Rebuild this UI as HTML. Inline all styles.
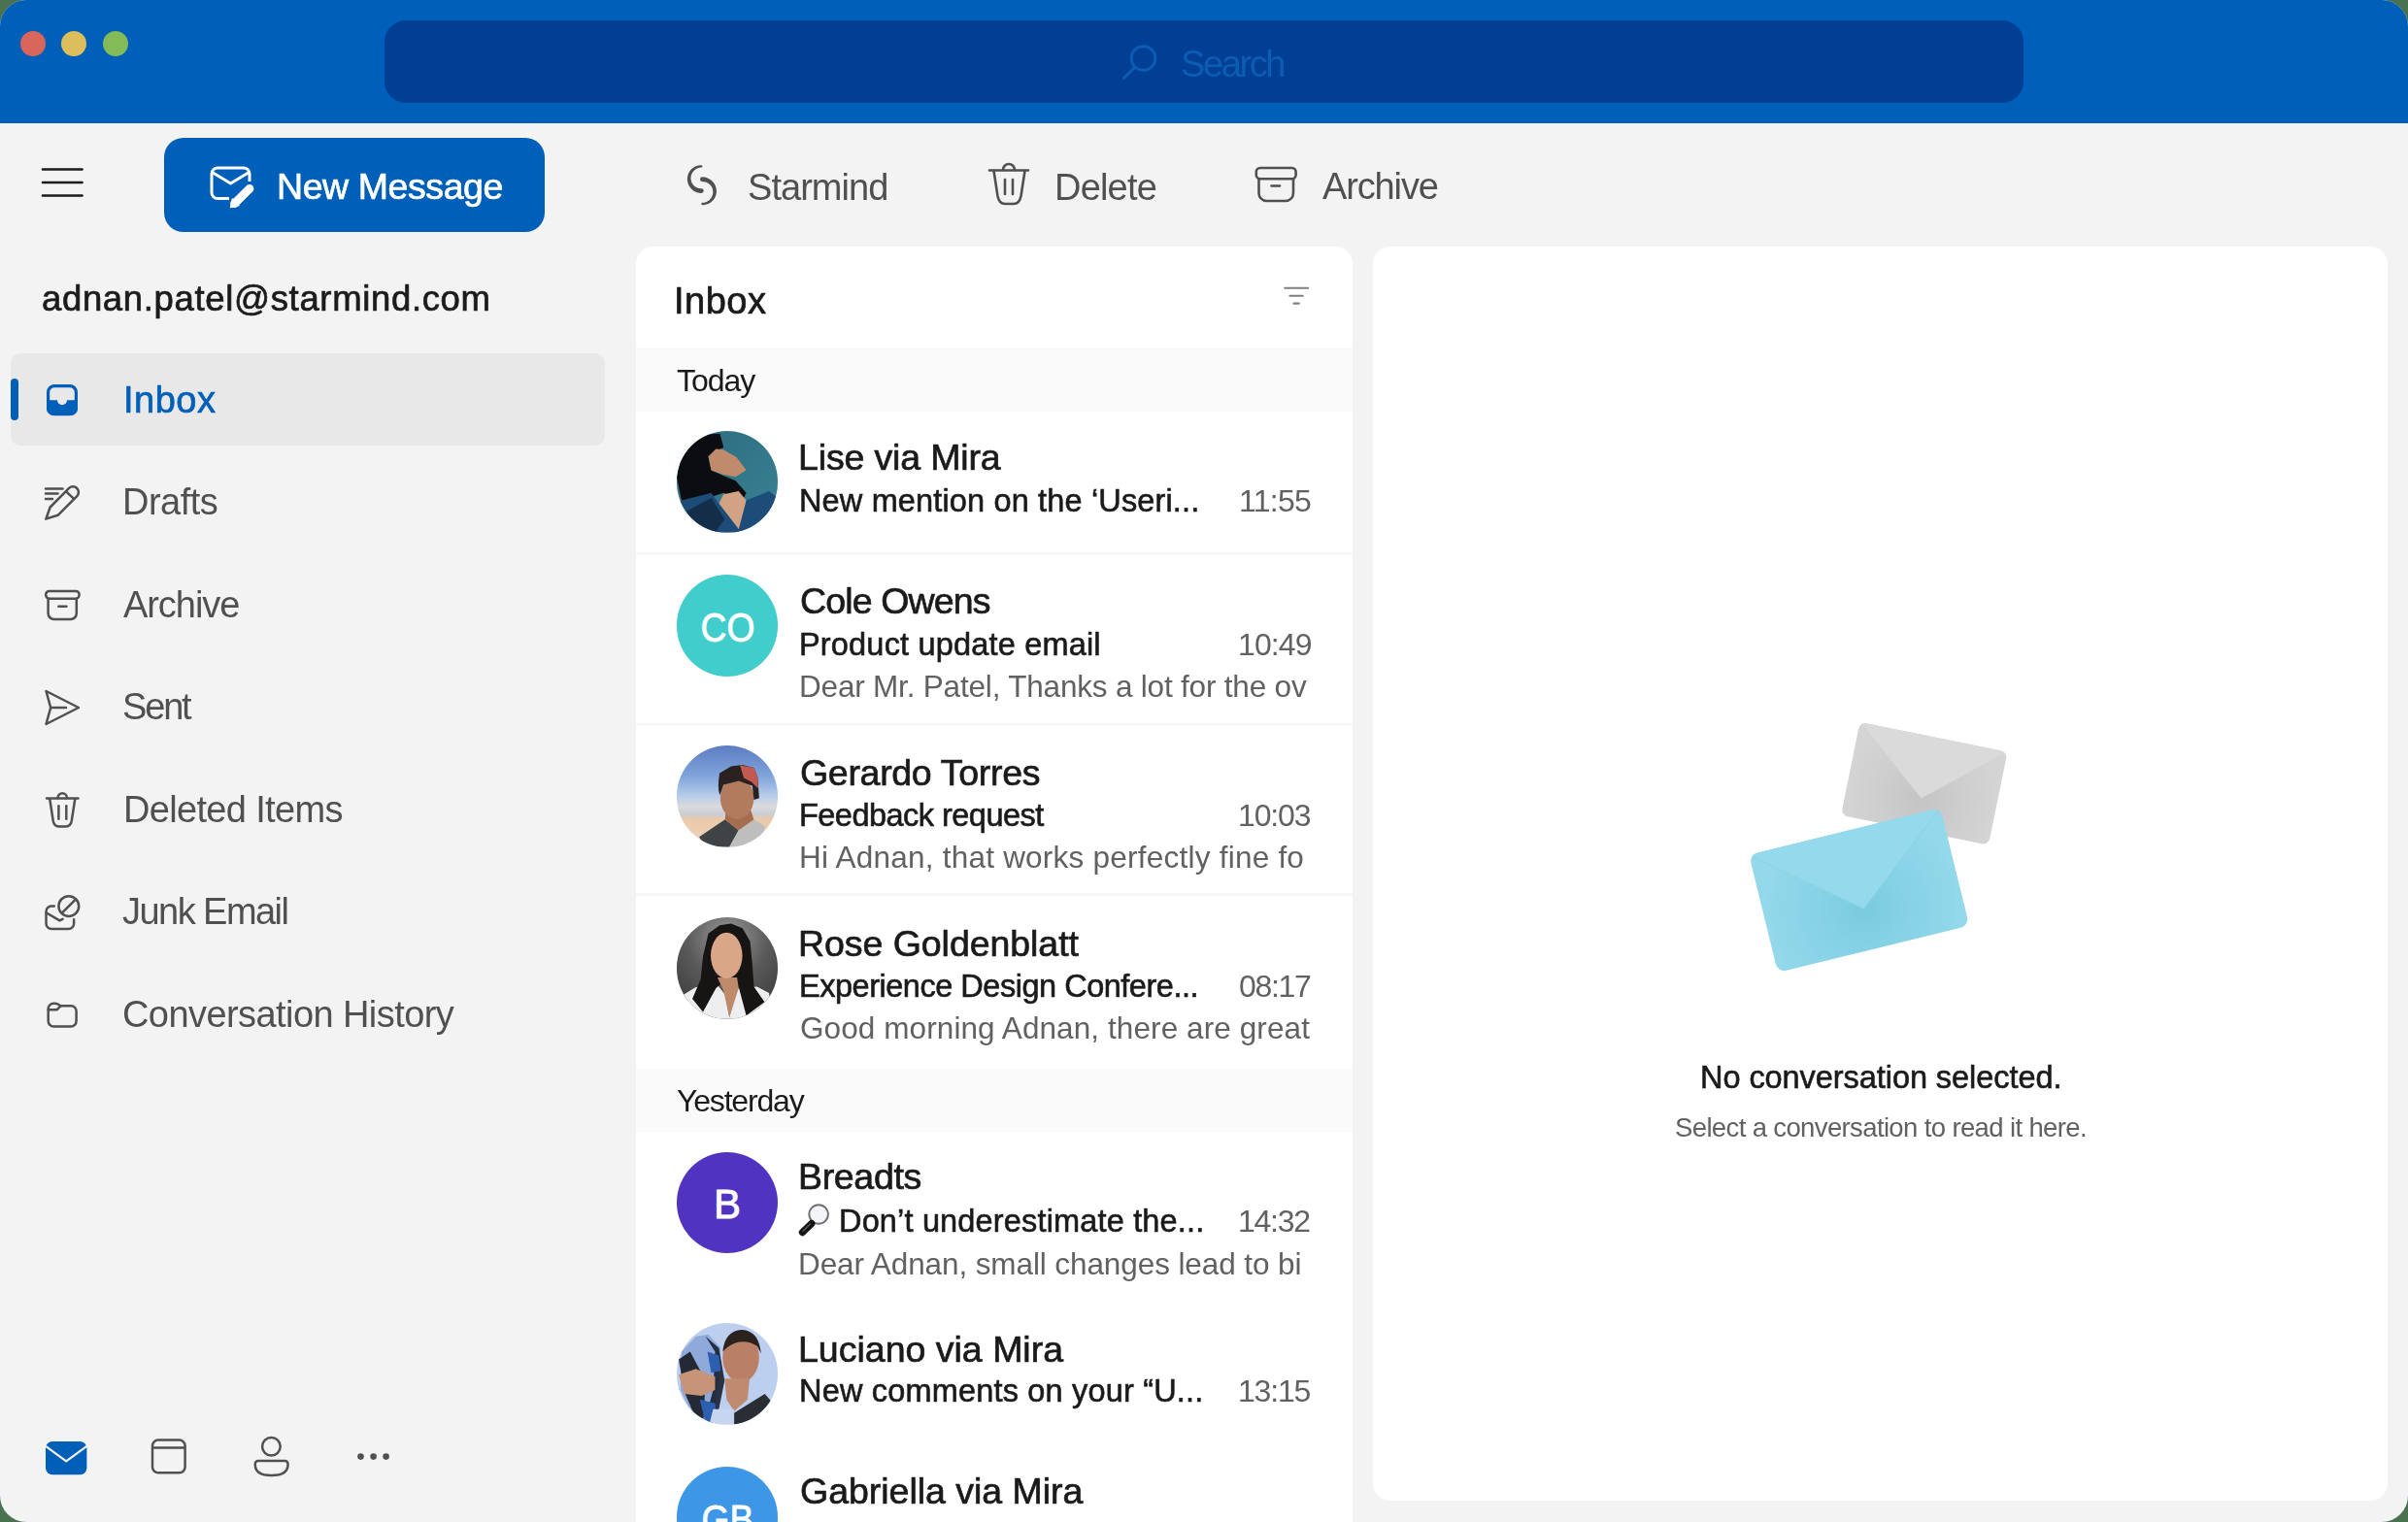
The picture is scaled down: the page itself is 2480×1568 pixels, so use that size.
<!DOCTYPE html>
<html><head><meta charset="utf-8"><title>Mail</title>
<style>
html,body{margin:0;padding:0;width:2480px;height:1568px;overflow:hidden;background:#4A7150;}
*{box-sizing:border-box;}
#win{position:absolute;left:0;top:0;width:2480px;height:1568px;border-radius:27px;overflow:hidden;background:#F3F3F3;font-family:"Liberation Sans",sans-serif;}
.t{position:absolute;white-space:nowrap;will-change:transform;}
</style></head><body><div id="win">
<div style="position:absolute;left:0;top:0;width:2480px;height:126.5px;background:#005FB8"></div>
<div style="position:absolute;left:21.3px;top:32px;width:26px;height:26px;border-radius:50%;background:#D9665B"></div>
<div style="position:absolute;left:63.2px;top:32px;width:26px;height:26px;border-radius:50%;background:#DCBE5D"></div>
<div style="position:absolute;left:105.8px;top:32px;width:26px;height:26px;border-radius:50%;background:#82BB58"></div>
<div style="position:absolute;left:396px;top:21px;width:1688px;height:85px;border-radius:22px;background:#003F93"></div>
<svg style="position:absolute;left:1150px;top:40px" width="50" height="50" viewBox="1150 40 50 50"><circle cx="1177.5" cy="60" r="12.3" fill="none" stroke="#0A5DB3" stroke-width="3"/><line x1="1168.5" y1="69.5" x2="1157.5" y2="80.5" stroke="#0A5DB3" stroke-width="3" stroke-linecap="round"/></svg>
<svg style="position:absolute;left:0;top:126px" width="640" height="128" viewBox="0 126 640 128"><g stroke="#1a1a1a" stroke-width="2.6" stroke-linecap="round"><line x1="44" y1="174.5" x2="84.5" y2="174.5"/><line x1="44" y1="188" x2="84.5" y2="188"/><line x1="44" y1="201.5" x2="84.5" y2="201.5"/></g></svg>
<div style="position:absolute;left:169px;top:142px;width:392px;height:97px;border-radius:20px;background:#005FB8"></div>
<svg style="position:absolute;left:200px;top:160px" width="80" height="70" viewBox="200 160 80 70"><path d="M236,204.5 H224 a6,6 0 0 1 -6,-6 V179 a6,6 0 0 1 6,-6 H251 a6,6 0 0 1 6,6 V187" fill="none" stroke="#fff" stroke-width="3"/><path d="M218.5,177.5 L237.5,189 L256.5,177.5" fill="none" stroke="#fff" stroke-width="3" stroke-linejoin="round"/><path d="M241.6,209.6 L257,194.4" stroke="#fff" stroke-width="8.8" stroke-linecap="round"/><path d="M237.6,213.6 L239.5,205 L246,211.5 Z" fill="#fff" stroke="#fff" stroke-width="1.5" stroke-linejoin="round"/></svg>
<svg style="position:absolute;left:690px;top:150px" width="820" height="80" viewBox="690 150 820 80"><g fill="#505050"><path d="M722.30,170.25 L721.22,170.26 L720.14,170.36 L719.07,170.54 L718.01,170.80 L716.98,171.15 L715.97,171.57 L715.00,172.08 L714.07,172.67 L713.18,173.32 L712.35,174.05 L711.57,174.84 L710.86,175.69 L710.22,176.59 L709.64,177.55 L709.15,178.55 L708.73,179.59 L708.39,180.66 L708.14,181.76 L707.98,182.87 L707.90,184.00 L707.91,185.13 L708.01,186.26 L708.20,187.38 L708.48,188.49 L708.85,189.57 L709.30,190.63 L709.83,191.64 L710.44,192.62 L711.13,193.54 L711.89,194.41 L712.72,195.22 L713.61,195.97 L714.56,196.64 L715.56,197.24 L716.60,197.75 L717.69,198.19 L718.81,198.54 L719.96,198.80 L721.12,198.97 L722.30,199.05 A2.45,2.45 0 0 0 722.30,194.15 L721.50,194.15 L720.70,194.09 L719.91,193.96 L719.12,193.78 L718.35,193.53 L717.60,193.22 L716.88,192.85 L716.18,192.42 L715.52,191.94 L714.89,191.41 L714.31,190.82 L713.77,190.20 L713.29,189.52 L712.85,188.81 L712.47,188.07 L712.15,187.30 L711.89,186.50 L711.70,185.68 L711.57,184.84 L711.50,184.00 L711.50,183.15 L711.57,182.30 L711.70,181.46 L711.90,180.62 L712.17,179.80 L712.50,179.01 L712.90,178.24 L713.35,177.50 L713.87,176.80 L714.43,176.13 L715.05,175.52 L715.72,174.95 L716.44,174.43 L717.19,173.97 L717.98,173.57 L718.80,173.23 L719.65,172.96 L720.52,172.76 L721.40,172.62 L722.30,172.55 A1.15,1.15 0 0 0 722.30,170.25 Z"/><path d="M723.50,182.35 L724.68,182.43 L725.84,182.60 L726.99,182.86 L728.11,183.21 L729.20,183.65 L730.24,184.16 L731.24,184.76 L732.19,185.43 L733.08,186.18 L733.91,186.99 L734.67,187.86 L735.36,188.78 L735.97,189.76 L736.50,190.77 L736.95,191.83 L737.32,192.91 L737.60,194.02 L737.79,195.14 L737.89,196.27 L737.90,197.40 L737.82,198.53 L737.66,199.64 L737.41,200.74 L737.07,201.81 L736.65,202.85 L736.16,203.85 L735.58,204.81 L734.94,205.71 L734.23,206.56 L733.45,207.35 L732.62,208.08 L731.73,208.73 L730.80,209.32 L729.83,209.83 L728.82,210.25 L727.79,210.60 L726.73,210.86 L725.66,211.04 L724.58,211.14 L723.50,211.15 A1.15,1.15 0 0 1 723.50,208.85 L724.40,208.78 L725.28,208.64 L726.15,208.44 L727.00,208.17 L727.82,207.83 L728.61,207.43 L729.36,206.97 L730.08,206.45 L730.75,205.88 L731.37,205.27 L731.93,204.60 L732.45,203.90 L732.90,203.16 L733.30,202.39 L733.63,201.60 L733.90,200.78 L734.10,199.94 L734.23,199.10 L734.30,198.25 L734.30,197.40 L734.23,196.56 L734.10,195.72 L733.91,194.90 L733.65,194.10 L733.33,193.33 L732.95,192.59 L732.51,191.88 L732.03,191.20 L731.49,190.58 L730.91,189.99 L730.28,189.46 L729.62,188.98 L728.92,188.55 L728.20,188.18 L727.45,187.87 L726.68,187.62 L725.89,187.44 L725.10,187.31 L724.30,187.25 L723.50,187.25 A2.45,2.45 0 0 1 723.50,182.35 Z"/></g><g fill="none" stroke="#505050" stroke-width="2.6" stroke-linecap="round" stroke-linejoin="round"><line x1="1019" y1="175.5" x2="1059" y2="175.5"/><path d="M1033,175 A6,6 0 0 1 1045,175"/><path d="M1023.5,176 L1027.5,202 Q1029,210 1035,210 H1044 Q1050,210 1051.5,202 L1055.5,176"/><line x1="1035" y1="185" x2="1035" y2="200"/><line x1="1043" y1="185" x2="1043" y2="200"/><rect x="1293.8" y="173" width="40.8" height="11.2" rx="4"/><path d="M1296.5,184.5 V199 a8,8 0 0 0 8,8 H1324 a8,8 0 0 0 8,-8 V184.5"/><line x1="1309.5" y1="191.5" x2="1318" y2="191.5"/></g></svg>
<div style="position:absolute;left:10.5px;top:364px;width:612px;height:94.5px;border-radius:10px;background:#E8E8E8"></div>
<div style="position:absolute;left:10.5px;top:390px;width:8px;height:42.5px;border-radius:4px;background:#005FB8"></div>
<svg style="position:absolute;left:0;top:380px" width="120" height="700" viewBox="0 380 120 700"><rect x="49.6" y="397.6" width="28.8" height="29" rx="6.5" fill="none" stroke="#005FB8" stroke-width="3.2"/><path d="M48,412.3 H59 a5,5 0 0 0 10,0 H80 V421 a7,7 0 0 1 -7,7 H55 a7,7 0 0 1 -7,-7 Z" fill="#005FB8"/><g fill="none" stroke="#505050" stroke-width="2.5" stroke-linecap="round" stroke-linejoin="round"><line x1="47" y1="503.4" x2="64.5" y2="503.4"/><line x1="47" y1="508.6" x2="59.5" y2="508.6"/><line x1="47" y1="513.9" x2="54" y2="513.9"/><path d="M47.3,534.6 L51.7,522.5 L71.1,502.9 A5.8,5.8 0 0 1 79.3,511.1 L59.6,530.8 Z"/><line x1="68.4" y1="506.7" x2="75.6" y2="513.4"/><rect x="47.2" y="608.9" width="34.4" height="7.8" rx="3.6"/><path d="M49.6,617 V632 a6,6 0 0 0 6,6 H72.8 a6,6 0 0 0 6,-6 V617"/><line x1="60.3" y1="624.7" x2="68.4" y2="624.7"/><path d="M47.5,712 L81,729 L47.5,746 L52.2,729 Z"/><line x1="52.2" y1="729" x2="68" y2="729"/><line x1="48" y1="822.6" x2="80.5" y2="822.6"/><path d="M59.5,822 A4.7,4.7 0 0 1 68.9,822"/><path d="M51.3,823.5 L54.8,846 Q55.8,851.6 61.5,851.6 H67 Q72.7,851.6 73.7,846 L77.2,823.5"/><line x1="60.4" y1="830.2" x2="60.4" y2="843.8"/><line x1="68.3" y1="830.2" x2="68.3" y2="843.8"/><path d="M55.8,933.6 H53 a5.5,5.5 0 0 0 -5.5,5.5 V951.6 a5.5,5.5 0 0 0 5.5,5.5 H70.6 a5.5,5.5 0 0 0 5.5,-5.5 V947.3"/><path d="M48,940.5 L61.4,948.4 L64.6,946.8"/><circle cx="70.8" cy="933.6" r="10.4"/><line x1="64" y1="940.4" x2="77.6" y2="926.8"/><path d="M49.7,1043 V1052 a5.5,5.5 0 0 0 5.5,5.5 H73.1 a5.5,5.5 0 0 0 5.5,-5.5 V1041.8 a5.5,5.5 0 0 0 -5.5,-5.5 H62.5 L59,1034.2 Q58,1033.8 56.5,1033.8 H55.2 a5.5,5.5 0 0 0 -5.5,5.5 Z"/><path d="M49.7,1040.3 H58.5 L62.5,1036.3"/></g></svg>
<svg style="position:absolute;left:30px;top:1470px" width="400" height="70" viewBox="30 1470 400 70"><rect x="47" y="1485" width="42.4" height="34.2" rx="7" fill="#005FB8"/><path d="M47,1489.8 L68.2,1505.3 L89.4,1489.8" fill="none" stroke="#f3f3f3" stroke-width="2.2"/><g fill="none" stroke="#505050" stroke-width="2.5" stroke-linecap="round" stroke-linejoin="round"><rect x="157" y="1483.6" width="33.6" height="33.7" rx="6"/><line x1="157.5" y1="1491.5" x2="190" y2="1491.5"/><circle cx="279.4" cy="1490.2" r="9.3"/><path d="M266,1505 H293.5 a3,3 0 0 1 3,3 V1509 Q296.5,1520 279.6,1520 Q262.8,1520 262.8,1509 V1508 a3,3 0 0 1 3,-3 Z"/></g><g fill="#505050"><circle cx="371.5" cy="1500.6" r="3.3"/><circle cx="384.6" cy="1500.6" r="3.3"/><circle cx="397.6" cy="1500.6" r="3.3"/></g></svg>
<div class="lp" style="position:absolute;left:654.5px;top:253.7px;width:738.5px;height:1400px;border-radius:18px;background:#ffffff;overflow:hidden"><svg style="position:absolute;left:660.5px;top:36.30000000000001px" width="40" height="30" viewBox="1315 290 40 30"><g stroke="#808080" stroke-width="2.1" stroke-linecap="round"><line x1="1323.2" y1="296.8" x2="1347.2" y2="296.8"/><line x1="1328.4" y1="304.8" x2="1341.8" y2="304.8"/><line x1="1332.4" y1="312.6" x2="1337.8" y2="312.6"/></g></svg><div style="position:absolute;left:0;top:104.69999999999999px;width:100%;height:65.4px;background:#FAFAFA"></div><div style="position:absolute;left:0;top:847.3px;width:100%;height:64.6px;background:#FAFAFA"></div><div style="position:absolute;left:0;top:315.3px;width:100%;height:3px;background:#F7F7F7"></div><div style="position:absolute;left:0;top:491.3px;width:100%;height:3px;background:#F7F7F7"></div><div style="position:absolute;left:0;top:666.8px;width:100%;height:3px;background:#F7F7F7"></div><div style="position:absolute;left:42.299999999999955px;top:190.8px;width:104.5px;height:104.5px;border-radius:50%;overflow:hidden;"><svg width="104.5" height="104.5" viewBox="0 0 106 106"><defs><linearGradient id="lg1" x1="0" y1="0" x2="1" y2="1"><stop offset="0" stop-color="#2C6A7C"/><stop offset="1" stop-color="#3A8397"/></linearGradient></defs><rect width="106" height="106" fill="url(#lg1)"/><path d="M0,48 L5,25 L17,9 L33,3.6 L45,2.8 L49,17 L41,21 L33,26.6 L36,41 L49,47 L61.5,52 L72.6,64.7 L68.7,72.6 L48.8,64.7 L36.9,68.7 L25,76.6 L17,80.6 L5,72.6 Z" fill="#0B0D10"/><path d="M33,26.6 L40.9,18.7 L48.8,19.4 L62.3,27.4 L72.6,40.9 L61.5,48 L48.8,45.6 L36,41 Z" fill="#C08A6C"/><path d="M48.8,66.3 L64.7,63 L72.6,72.6 L71,96.4 L64.7,102.8 L44,75.8 Z" fill="#D2A284"/><path d="M0,76 L5,72.6 L36,64.7 L44,75.8 L64.7,102.8 L72.6,72.6 L96.4,63 L106,70 L106,106 L0,106 Z" fill="#1E4C78"/><path d="M10,84 L36,70 L50,92 L40,106 L20,100 Z" fill="#0D1A2A" opacity="0.6"/></svg></div><div style="position:absolute;left:42.299999999999955px;top:338.8px;width:104.5px;height:104.5px;border-radius:50%;overflow:hidden;background:#40CDCB"><div style="position:absolute;left:0;width:104.5px;top:33.7px;font-size:42px;line-height:42px;text-align:center;color:#fff;-webkit-text-stroke:0.8px #fff;white-space:nowrap"><span style="display:inline-block;transform:scaleX(0.885)">CO</span></div></div><div style="position:absolute;left:42.299999999999955px;top:514.5999999999999px;width:104.5px;height:104.5px;border-radius:50%;overflow:hidden;"><svg width="104.5" height="104.5" viewBox="0 0 106 106"><defs><linearGradient id="gg1" x1="0" y1="0" x2="0" y2="1"><stop offset="0" stop-color="#5D7DC2"/><stop offset="0.3" stop-color="#7FA3DA"/><stop offset="0.5" stop-color="#B7CDEB"/><stop offset="0.6" stop-color="#DADADA"/><stop offset="0.68" stop-color="#C9CDD3"/><stop offset="0.72" stop-color="#E8C9AA"/><stop offset="1" stop-color="#F0D6BE"/></linearGradient></defs><rect width="106" height="106" fill="url(#gg1)"/><path d="M23.4,95.6 L50.4,77.4 L64.7,88.5 L55,106 L30,106 Z" fill="#3E4446"/><path d="M55,106 L64.7,88.5 L80.6,77.4 L92.5,84.5 L88.5,96.4 L72.6,106 Z" fill="#BEBEBE"/><path d="M50.4,77.4 L52,64 L76,64 L80.6,77.4 L64.7,88.5 Z" fill="#A56E50"/><ellipse cx="63" cy="55" rx="17.5" ry="22" fill="#B27B5D"/><path d="M45,52 Q42,44 44.8,29 L56.7,21.8 L68.7,20.2 L80.6,23.4 L84.5,33 L86.1,55 L80.6,56.7 L79,42 L64.7,37 L48.8,41 Z" fill="#2A2220"/><path d="M66,20.5 L80.6,23.4 L84.5,33 L85,45 L78,38 L70,34 Z" fill="#C25A52"/></svg></div><div style="position:absolute;left:42.299999999999955px;top:691.5999999999999px;width:104.5px;height:104.5px;border-radius:50%;overflow:hidden;"><svg width="104.5" height="104.5" viewBox="0 0 106 106"><defs><radialGradient id="rg1" cx="0.5" cy="0.2" r="0.8"><stop offset="0" stop-color="#9A9A9A"/><stop offset="0.5" stop-color="#5A5A5A"/><stop offset="1" stop-color="#3C3C3C"/></radialGradient></defs><rect width="106" height="106" fill="url(#rg1)"/><path d="M7.5,80.6 L19.4,73.4 L40.9,68.7 L50.4,80.6 L55,104.4 L60.7,80.6 L64.7,74 L83.7,72.6 L96.4,79 L100,106 L5,106 Z" fill="#ECEEF0"/><path d="M27.4,98.8 L16.3,85.3 L25,64.7 L27.4,40.9 L33,17 L44.8,8.3 L56.7,6.7 L68.7,11.5 L76.6,25 L78.9,48.8 L80.6,72.6 L91.7,88.5 L72.6,102.8 L65,74 L53,64 L41,74 Z" fill="#171414"/><path d="M42.5,63 L63,63 L64.7,74 L55,104.4 L48.8,76.6 Z" fill="#BE8A6A"/><ellipse cx="52" cy="40" rx="16.5" ry="24" fill="#D9A687"/></svg></div><div style="position:absolute;left:42.299999999999955px;top:933.0px;width:104.5px;height:104.5px;border-radius:50%;overflow:hidden;background:#5033C0"><div style="position:absolute;left:0;width:104.5px;top:33.7px;font-size:42px;line-height:42px;text-align:center;color:#fff;-webkit-text-stroke:0.8px #fff;white-space:nowrap"><span style="display:inline-block;transform:scaleX(1)">B</span></div></div><div style="position:absolute;left:42.299999999999955px;top:1109.8px;width:104.5px;height:104.5px;border-radius:50%;overflow:hidden;"><svg width="104.5" height="104.5" viewBox="0 0 106 106"><rect width="106" height="106" fill="#BCCFEE"/><path d="M5,30 L20,14 L33,12 L46,26 L44,60 L40,88 L34,106 L18,100 L4,70 Z" fill="#8FA9DB"/><path d="M2,38 L14,30 L30,60 L28,100 L20,100 L8,72 Z" fill="#101418" opacity="0.85"/><path d="M30,14 L44,26 L50,60 L44,90 L36,106 L30,100 L38,70 L40,30 Z" fill="#1A2030" opacity="0.9"/><path d="M32,30 L44,34 L46,50 L36,52 Z" fill="#2D5FB0"/><path d="M24,80 L40,84 L42,100 L30,104 Z" fill="#2D5FB0"/><path d="M2,54 L20,48 L40,56 L40,70 L26,76 L8,74 Z" fill="#C89478"/><ellipse cx="67" cy="36" rx="19" ry="26" fill="#B98066"/><path d="M48,30 Q50,8 68,7 Q86,8 88,32 L84,24 Q68,14 52,26 Z" fill="#2B211E"/><path d="M50,58 L76,58 L74,80 L60,92 L52,80 Z" fill="#C08A70"/><path d="M60,94 L92,74 L104,88 L90,104 L60,106 Z" fill="#2A2E34"/><path d="M38,90 L60,90 L58,106 L34,106 Z" fill="#C6D6F0"/></svg></div><div style="position:absolute;left:42.299999999999955px;top:1257.3px;width:104.5px;height:104.5px;border-radius:50%;overflow:hidden;background:#3D97E6"><div style="position:absolute;left:0;width:104.5px;top:33.7px;font-size:42px;line-height:42px;text-align:center;color:#fff;-webkit-text-stroke:0.8px #fff;white-space:nowrap"><span style="display:inline-block;transform:scaleX(0.885)">GB</span></div></div><svg style="position:absolute;left:163.5px;top:982.3px" width="40" height="40" viewBox="818 1236 40 40"><circle cx="843.1" cy="1251" r="9.8" fill="#F3F5F8" stroke="#707070" stroke-width="1.9"/><path d="M835.8,1260.6 L826.4,1269.6" stroke="#151515" stroke-width="7.2" stroke-linecap="round"/><path d="M834.5,1261 L827,1268.2" stroke="#8a8a8a" stroke-width="1.3" stroke-linecap="round" opacity="0.6"/></svg><div class="t" id="list_inbox" style="left:39.90px;top:36.83px;font-size:38px;line-height:38px;color:#1a1a1a;letter-spacing:0.500px;-webkit-text-stroke:0.7px #1a1a1a;">Inbox</div>
<div class="t" id="today" style="left:42.10px;top:122.61px;font-size:32px;line-height:32px;color:#1a1a1a;letter-spacing:-1.050px;">Today</div>
<div class="t" id="yesterday" style="left:42.10px;top:863.91px;font-size:32px;line-height:32px;color:#1a1a1a;letter-spacing:-1.180px;">Yesterday</div>
<div class="t" id="lise_name" style="left:167.60px;top:199.16px;font-size:37.5px;line-height:37.5px;color:#1a1a1a;letter-spacing:-0.150px;-webkit-text-stroke:0.7px #1a1a1a;">Lise via Mira</div>
<div class="t" id="lise_subj" style="left:168.60px;top:245.99px;font-size:32.5px;line-height:32.5px;color:#1a1a1a;letter-spacing:0.148px;-webkit-text-stroke:0.6px #1a1a1a;">New mention on the ‘Useri...</div>
<div class="t" id="lise_time" style="left:621.30px;top:246.41px;font-size:32px;line-height:32px;color:#616161;letter-spacing:-0.700px;">11:55</div>
<div class="t" id="cole_name" style="left:169.60px;top:347.76px;font-size:37.5px;line-height:37.5px;color:#1a1a1a;letter-spacing:-0.867px;-webkit-text-stroke:0.7px #1a1a1a;">Cole Owens</div>
<div class="t" id="cole_subj" style="left:168.60px;top:393.99px;font-size:32.5px;line-height:32.5px;color:#1a1a1a;letter-spacing:0.181px;-webkit-text-stroke:0.6px #1a1a1a;">Product update email</div>
<div class="t" id="cole_time" style="left:620.50px;top:394.41px;font-size:32px;line-height:32px;color:#616161;letter-spacing:-0.900px;">10:49</div>
<div class="t" id="cole_prev" style="left:168.60px;top:438.14px;font-size:31.5px;line-height:31.5px;color:#616161;letter-spacing:-0.191px;">Dear Mr. Patel, Thanks a lot for the ov</div>
<div class="t" id="gerardo_name" style="left:169.60px;top:523.96px;font-size:37.5px;line-height:37.5px;color:#1a1a1a;letter-spacing:-0.309px;-webkit-text-stroke:0.7px #1a1a1a;">Gerardo Torres</div>
<div class="t" id="gerardo_subj" style="left:168.60px;top:570.09px;font-size:32.5px;line-height:32.5px;color:#1a1a1a;letter-spacing:-0.528px;-webkit-text-stroke:0.6px #1a1a1a;">Feedback request</div>
<div class="t" id="gerardo_time" style="left:620.50px;top:570.51px;font-size:32px;line-height:32px;color:#616161;letter-spacing:-1.150px;">10:03</div>
<div class="t" id="gerardo_prev" style="left:168.60px;top:614.24px;font-size:31.5px;line-height:31.5px;color:#616161;letter-spacing:0.233px;">Hi Adnan, that works perfectly fine fo</div>
<div class="t" id="rose_name" style="left:167.60px;top:700.26px;font-size:37.5px;line-height:37.5px;color:#1a1a1a;letter-spacing:-0.055px;-webkit-text-stroke:0.7px #1a1a1a;">Rose Goldenblatt</div>
<div class="t" id="rose_subj" style="left:168.60px;top:746.09px;font-size:32.5px;line-height:32.5px;color:#1a1a1a;letter-spacing:-0.482px;-webkit-text-stroke:0.6px #1a1a1a;">Experience Design Confere...</div>
<div class="t" id="rose_time" style="left:621.30px;top:746.51px;font-size:32px;line-height:32px;color:#616161;letter-spacing:-1.300px;">08:17</div>
<div class="t" id="rose_prev" style="left:169.60px;top:790.54px;font-size:31.5px;line-height:31.5px;color:#616161;letter-spacing:0.090px;">Good morning Adnan, there are great</div>
<div class="t" id="breadts_name" style="left:167.60px;top:940.76px;font-size:37.5px;line-height:37.5px;color:#1a1a1a;letter-spacing:-0.331px;-webkit-text-stroke:0.7px #1a1a1a;">Breadts</div>
<div class="t" id="breadts_subj" style="left:209.50px;top:987.99px;font-size:32.5px;line-height:32.5px;color:#1a1a1a;letter-spacing:0.164px;-webkit-text-stroke:0.6px #1a1a1a;">Don’t underestimate the...</div>
<div class="t" id="breadts_time" style="left:620.80px;top:988.41px;font-size:32px;line-height:32px;color:#616161;letter-spacing:-1.250px;">14:32</div>
<div class="t" id="breadts_prev" style="left:167.90px;top:1033.14px;font-size:31.5px;line-height:31.5px;color:#616161;letter-spacing:-0.098px;">Dear Adnan, small changes lead to bi</div>
<div class="t" id="luciano_name" style="left:167.50px;top:1118.26px;font-size:37.5px;line-height:37.5px;color:#1a1a1a;letter-spacing:0.000px;-webkit-text-stroke:0.7px #1a1a1a;">Luciano via Mira</div>
<div class="t" id="luciano_subj" style="left:168.50px;top:1163.29px;font-size:32.5px;line-height:32.5px;color:#1a1a1a;letter-spacing:0.180px;-webkit-text-stroke:0.6px #1a1a1a;">New comments on your “U...</div>
<div class="t" id="luciano_time" style="left:620.60px;top:1163.71px;font-size:32px;line-height:32px;color:#616161;letter-spacing:-1.200px;">13:15</div>
<div class="t" id="gabriella_name" style="left:169.50px;top:1264.56px;font-size:37.5px;line-height:37.5px;color:#1a1a1a;letter-spacing:-0.024px;-webkit-text-stroke:0.7px #1a1a1a;">Gabriella via Mira</div>
</div>
<div style="position:absolute;left:1414px;top:253.7px;width:1045px;height:1292.3px;border-radius:18px;background:#ffffff"></div>
<svg style="position:absolute;left:1760px;top:700px" width="340" height="330" viewBox="1760 700 340 330"><defs><radialGradient id="eg" cx="0" cy="15.7" r="77.5" gradientUnits="userSpaceOnUse"><stop offset="0" stop-color="#C4C4C4" stop-opacity="1"/><stop offset="0.45" stop-color="#C4C4C4" stop-opacity="0.5"/><stop offset="1" stop-color="#C4C4C4" stop-opacity="0"/></radialGradient><clipPath id="egc"><rect x="-77.5" y="-49.0" width="155" height="98" rx="7"/></clipPath></defs><g transform="translate(1981.75,807.2) rotate(11.5)"><rect x="-77.5" y="-49.0" width="155" height="98" rx="7" fill="#D4D4D4"/><g clip-path="url(#egc)"><rect x="-77.5" y="-49.0" width="155" height="98" fill="url(#eg)"/><path d="M-77.5,-49.0 L77.5,-49.0 L0,15.7 Z" fill="#DADADA"/><path d="M-77.5,-49.0 L0,15.7 L77.5,-49.0" fill="none" stroke="#CFCFCF" stroke-width="1" opacity="0.5"/></g></g><defs><radialGradient id="eb" cx="0" cy="20.0" r="101.5" gradientUnits="userSpaceOnUse"><stop offset="0" stop-color="#7ACBDF" stop-opacity="1"/><stop offset="0.45" stop-color="#7ACBDF" stop-opacity="0.5"/><stop offset="1" stop-color="#7ACBDF" stop-opacity="0"/></radialGradient><clipPath id="ebc"><rect x="-101.5" y="-62.5" width="203" height="125" rx="9"/></clipPath></defs><g transform="translate(1914.7,917.1) rotate(-13.8)"><rect x="-101.5" y="-62.5" width="203" height="125" rx="9" fill="#93D8EB"/><g clip-path="url(#ebc)"><rect x="-101.5" y="-62.5" width="203" height="125" fill="url(#eb)"/><path d="M-101.5,-62.5 L101.5,-62.5 L0,20.0 Z" fill="#94D9EC"/><path d="M-101.5,-62.5 L0,20.0 L101.5,-62.5" fill="none" stroke="#86D2E6" stroke-width="1" opacity="0.5"/></g></g></svg>
<div class="t" id="search" style="left:1216.00px;top:46.83px;font-size:38px;line-height:38px;color:#0A5DB3;letter-spacing:-2.400px;">Search</div>
<div class="t" id="newmsg" style="left:284.80px;top:174.06px;font-size:37.5px;line-height:37.5px;color:#ffffff;letter-spacing:-0.420px;-webkit-text-stroke:0.7px #ffffff;">New Message</div>
<div class="t" id="tb_starmind" style="left:770.00px;top:173.83px;font-size:38px;line-height:38px;color:#505050;letter-spacing:-0.964px;">Starmind</div>
<div class="t" id="tb_delete" style="left:1086.20px;top:173.83px;font-size:38px;line-height:38px;color:#505050;letter-spacing:-0.800px;">Delete</div>
<div class="t" id="tb_archive" style="left:1362.10px;top:173.33px;font-size:38px;line-height:38px;color:#505050;letter-spacing:-1.136px;">Archive</div>
<div class="t" id="email" style="left:42.80px;top:290.10px;font-size:36.5px;line-height:36.5px;color:#1b1b1b;letter-spacing:0.654px;-webkit-text-stroke:0.7px #1b1b1b;">adnan.patel@starmind.com</div>
<div class="t" id="nav_inbox" style="left:126.60px;top:392.63px;font-size:38px;line-height:38px;color:#005FB8;letter-spacing:0.500px;-webkit-text-stroke:0.7px #005FB8;">Inbox</div>
<div class="t" id="nav_drafts" style="left:126.30px;top:498.03px;font-size:38px;line-height:38px;color:#505050;letter-spacing:-0.500px;">Drafts</div>
<div class="t" id="nav_archive" style="left:126.50px;top:603.63px;font-size:38px;line-height:38px;color:#505050;letter-spacing:-1.064px;">Archive</div>
<div class="t" id="nav_sent" style="left:126.30px;top:709.13px;font-size:38px;line-height:38px;color:#505050;letter-spacing:-2.167px;">Sent</div>
<div class="t" id="nav_deleted" style="left:126.90px;top:814.53px;font-size:38px;line-height:38px;color:#505050;letter-spacing:-0.668px;">Deleted Items</div>
<div class="t" id="nav_junk" style="left:125.90px;top:920.03px;font-size:38px;line-height:38px;color:#505050;letter-spacing:-1.547px;">Junk Email</div>
<div class="t" id="nav_conv" style="left:125.90px;top:1025.93px;font-size:38px;line-height:38px;color:#505050;letter-spacing:-0.574px;">Conversation History</div>
<div class="t" id="noconv" style="left:1750.60px;top:1094.39px;font-size:32.5px;line-height:32.5px;color:#1a1a1a;letter-spacing:-0.063px;-webkit-text-stroke:0.6px #1a1a1a;">No conversation selected.</div>
<div class="t" id="select" style="left:1724.80px;top:1148.42px;font-size:27.5px;line-height:27.5px;color:#616161;letter-spacing:-0.630px;">Select a conversation to read it here.</div>

</div></body></html>
